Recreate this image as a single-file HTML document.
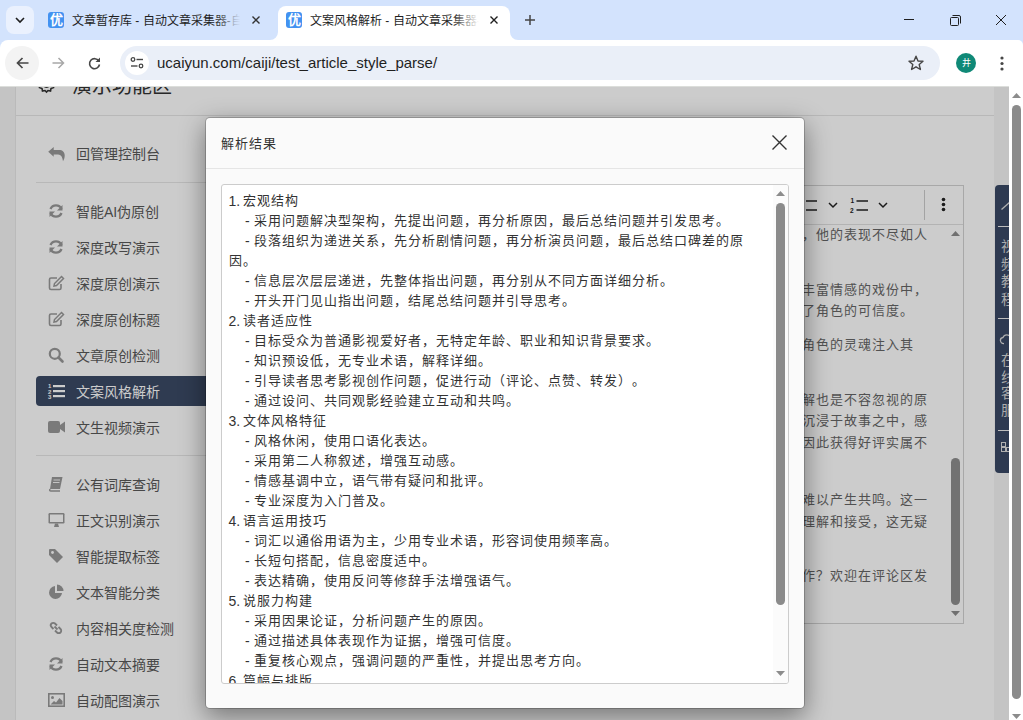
<!DOCTYPE html>
<html lang="zh-CN">
<head>
<meta charset="utf-8">
<style>
*{box-sizing:border-box;margin:0;padding:0}
html,body{width:1023px;height:720px;overflow:hidden;background:#fff;font-family:"Liberation Sans",sans-serif;text-spacing-trim:space-all}
.a{position:absolute}
svg{position:absolute;overflow:visible}
#tabstrip{left:0;top:0;width:1023px;height:50px;background:#d3e3fd}
#toolbar{left:0;top:40px;width:1023px;height:46px;background:#fff;border-radius:8px 5px 0 0}
.tt{position:absolute;top:13px;font-size:12px;color:#1f1f1f;white-space:nowrap;overflow:hidden;line-height:16px}
.fav{position:absolute;top:12px;width:16px;height:16px;background:#4392f1;border-radius:3px;color:#fff;font-size:13px;line-height:16px;text-align:center;font-weight:bold}
#omni{left:120px;top:46px;width:820px;height:34px;border-radius:17px;background:#eaeff8}
#url{left:157px;top:53px;font-size:15px;color:#1f1f1f;line-height:20px;white-space:nowrap}
#page{left:0;top:86px;width:1009px;height:634px;background:#f6f6f6;overflow:hidden}
#panel{left:16px;top:0;width:978px;height:700px;background:#fff}
.sep{position:absolute;height:1px;background:#e6e6e6}
.mi{position:absolute;left:36px;width:400px;height:30px;font-size:14px;color:#595959;line-height:30px;white-space:nowrap}
.mi .tx{position:absolute;left:40px;top:0.5px}
.mi.act{background:#3b4a66;color:#fff;border-radius:4px}
#overlay{left:0;top:0;width:1009px;height:634px;background:rgba(0,0,0,0.2)}
#vscroll{left:1009px;top:86px;width:14px;height:634px;background:#fff}
#modal{left:205px;top:117px;width:600px;height:592px;background:#fafafa;border:1px solid rgba(0,0,0,.2);border-radius:5px;box-shadow:0 8px 26px rgba(0,0,0,.42);background-clip:padding-box}
#mhead{left:0;top:0;width:598px;height:51px;border-bottom:1px solid #e5e5e5}
#mtitle{left:14.5px;top:15.5px;font-size:13px;letter-spacing:1px;color:#333;line-height:20px}
#ta{left:15px;top:66px;width:568px;height:500px;background:#fff;border:1px solid #ccc;border-radius:3px;overflow:hidden}
.ln{position:absolute;font-size:14px;line-height:20px;color:#333;white-space:nowrap}
.cj{font-size:13px;letter-spacing:1px}
.ed{position:absolute;font-size:13px;letter-spacing:1px;line-height:20px;color:#666;white-space:nowrap}
</style>
</head>
<body>
<div id="tabstrip" class="a"></div>
<div id="toolbar" class="a"></div>

<!-- tab strip -->
<div class="a" style="left:6px;top:6px;width:28px;height:28px;border-radius:8px;background:#eaf1fe"></div>
<svg style="left:14px;top:16px" width="12" height="8" viewBox="0 0 12 8"><path d="M2 2 L6 6 L10 2" stroke="#1f1f1f" stroke-width="1.6" fill="none"/></svg>
<div class="fav" style="left:48px">优</div>
<div class="tt" style="left:72px;width:168px">文章暂存库 - 自动文章采集器-自动文章</div>
<div class="a" style="left:215px;top:10px;width:28px;height:20px;background:linear-gradient(90deg,rgba(211,227,253,0),#d3e3fd 90%)"></div>
<svg style="left:252px;top:16px" width="8" height="8" viewBox="0 0 8 8"><path d="M0.5 0.5 L7.5 7.5 M7.5 0.5 L0.5 7.5" stroke="#333" stroke-width="1.4"/></svg>
<!-- active tab -->
<div class="a" style="left:278px;top:6px;width:232px;height:40px;background:#fff;border-radius:8px 8px 0 0"></div>
<svg style="left:270px;top:32px" width="8" height="8" viewBox="0 0 8 8"><path d="M8 0 V8 H0 A8 8 0 0 0 8 0 Z" fill="#fff"/></svg>
<svg style="left:510px;top:32px" width="8" height="8" viewBox="0 0 8 8"><path d="M0 0 V8 H8 A8 8 0 0 1 0 0 Z" fill="#fff"/></svg>
<div class="fav" style="left:286px">优</div>
<div class="tt" style="left:310px;width:170px">文案风格解析 - 自动文章采集器-自动</div>
<div class="a" style="left:452px;top:10px;width:30px;height:20px;background:linear-gradient(90deg,rgba(255,255,255,0),#fff 90%)"></div>
<svg style="left:490px;top:16px" width="8" height="8" viewBox="0 0 8 8"><path d="M0.5 0.5 L7.5 7.5 M7.5 0.5 L0.5 7.5" stroke="#1f1f1f" stroke-width="1.4"/></svg>
<svg style="left:525px;top:15px" width="10" height="10" viewBox="0 0 10 10"><path d="M5 0 V10 M0 5 H10" stroke="#444" stroke-width="1.5"/></svg>
<!-- window controls -->
<svg style="left:904px;top:19px" width="10" height="1" viewBox="0 0 10 1"><path d="M0 0.5 H10" stroke="#1f1f1f" stroke-width="1"/></svg>
<svg style="left:950px;top:15px" width="11" height="11" viewBox="0 0 11 11"><rect x="0.5" y="2.5" width="8" height="8" stroke="#1f1f1f" stroke-width="1" fill="none" rx="1"/><path d="M2.5 0.5 H9 Q10.5 0.5 10.5 2 V8.5" stroke="#1f1f1f" stroke-width="1" fill="none"/></svg>
<svg style="left:996px;top:15px" width="10" height="10" viewBox="0 0 10 10"><path d="M0 0 L10 10 M10 0 L0 10" stroke="#1f1f1f" stroke-width="1"/></svg>
<!-- toolbar -->
<div class="a" style="left:5px;top:46px;width:34px;height:34px;border-radius:17px;background:#f3f3f3"></div>
<svg style="left:16px;top:57px" width="13" height="12" viewBox="0 0 13 12"><path d="M12.5 6 H1.5 M6.5 1 L1.5 6 L6.5 11" stroke="#474747" stroke-width="1.7" fill="none"/></svg>
<svg style="left:52px;top:57px" width="13" height="12" viewBox="0 0 13 12"><path d="M0.5 6 H11.5 M6.5 1 L11.5 6 L6.5 11" stroke="#a8a8a8" stroke-width="1.5" fill="none"/></svg>
<svg style="left:88px;top:57px" width="13" height="13" viewBox="0 0 13 13"><path d="M10.8 4 A5 5 0 1 0 11.5 7.5" stroke="#474747" stroke-width="1.6" fill="none"/><path d="M12 0.5 V5 H7.5 Z" fill="#474747"/></svg>
<div id="omni" class="a"></div>
<div class="a" style="left:125px;top:51px;width:24px;height:24px;border-radius:12px;background:#fff"></div>
<svg style="left:130px;top:57px" width="14" height="12" viewBox="0 0 14 12"><circle cx="3" cy="2.5" r="1.8" stroke="#474747" stroke-width="1.3" fill="none"/><path d="M6.5 2.5 H13" stroke="#474747" stroke-width="1.4"/><circle cx="11" cy="9" r="1.8" stroke="#474747" stroke-width="1.3" fill="none"/><path d="M1 9 H7.5" stroke="#474747" stroke-width="1.4"/></svg>
<div id="url" class="a">ucaiyun.com/caiji/test_article_style_parse/</div>
<svg style="left:908px;top:55px" width="16" height="16" viewBox="0 0 16 16"><path d="M8 1.2 L10 6 L15 6.3 L11.2 9.5 L12.4 14.5 L8 11.8 L3.6 14.5 L4.8 9.5 L1 6.3 L6 6 Z" stroke="#474747" stroke-width="1.4" fill="none" stroke-linejoin="round"/></svg>
<div class="a" style="left:956px;top:53px;width:20px;height:20px;border-radius:10px;background:#108977;color:#fff;font-size:9px;line-height:20px;text-align:center">井</div>
<svg style="left:999px;top:55.5px" width="6" height="15" viewBox="0 0 6 15"><circle cx="3" cy="2" r="1.6" fill="#474747"/><circle cx="3" cy="7.5" r="1.6" fill="#474747"/><circle cx="3" cy="13" r="1.6" fill="#474747"/></svg>

<div id="page" class="a">
  <div id="panel" class="a"></div>
  <div class="a" style="left:15px;top:0;width:1px;height:634px;background:#e9e9e9"></div>
  <div class="sep" style="left:16px;top:29px;width:978px"></div>
  <div class="sep" style="left:36px;top:96px;width:400px"></div>
  <div class="sep" style="left:36px;top:369px;width:400px"></div>
  <div class="mi" style="top:52px"><svg style="left:12px;top:7px" width="17" height="17" viewBox="0 0 17 17"><path d="M0.2 6.8 L5.7 2 V5 H11 C14.5 5 16.7 7 16.7 10.5 C16.7 12.5 16.2 14.5 15 16.2 C14.6 13.5 13.8 9.5 10 9.5 H5.7 V11.7 Z" fill="#999"/></svg><div class="tx">回管理控制台</div></div>
<div class="mi" style="top:110px"><svg style="left:12px;top:7px" width="16" height="16" viewBox="0 0 16 16"><path d="M13.5 6 A6 6 0 0 0 2.5 6" stroke="#999" stroke-width="2.4" fill="none"/><path d="M14.5 2 L14.5 7.5 L9 7.5 Z" fill="#999"/><path d="M2.5 10 A6 6 0 0 0 13.5 10" stroke="#999" stroke-width="2.4" fill="none"/><path d="M1.5 14 L1.5 8.5 L7 8.5 Z" fill="#999"/></svg><div class="tx">智能AI伪原创</div></div>
<div class="mi" style="top:146px"><svg style="left:12px;top:7px" width="16" height="16" viewBox="0 0 16 16"><path d="M13.5 6 A6 6 0 0 0 2.5 6" stroke="#999" stroke-width="2.4" fill="none"/><path d="M14.5 2 L14.5 7.5 L9 7.5 Z" fill="#999"/><path d="M2.5 10 A6 6 0 0 0 13.5 10" stroke="#999" stroke-width="2.4" fill="none"/><path d="M1.5 14 L1.5 8.5 L7 8.5 Z" fill="#999"/></svg><div class="tx">深度改写演示</div></div>
<div class="mi" style="top:182px"><svg style="left:12px;top:7px" width="17" height="16" viewBox="0 0 17 16"><path d="M9 3 H3 Q1.5 3 1.5 4.5 V13 Q1.5 14.5 3 14.5 H11.5 Q13 14.5 13 13 V9" stroke="#999" stroke-width="1.6" fill="none"/><path d="M6 11 L6.5 8.5 L13.5 1.5 L15.5 3.5 L8.5 10.5 Z" fill="none" stroke="#999" stroke-width="1.5"/></svg><div class="tx">深度原创演示</div></div>
<div class="mi" style="top:218px"><svg style="left:12px;top:7px" width="17" height="16" viewBox="0 0 17 16"><path d="M9 3 H3 Q1.5 3 1.5 4.5 V13 Q1.5 14.5 3 14.5 H11.5 Q13 14.5 13 13 V9" stroke="#999" stroke-width="1.6" fill="none"/><path d="M6 11 L6.5 8.5 L13.5 1.5 L15.5 3.5 L8.5 10.5 Z" fill="none" stroke="#999" stroke-width="1.5"/></svg><div class="tx">深度原创标题</div></div>
<div class="mi" style="top:254px"><svg style="left:12px;top:7px" width="16" height="16" viewBox="0 0 16 16"><circle cx="6.8" cy="6.8" r="5" stroke="#999" stroke-width="2.2" fill="none"/><path d="M10.5 10.5 L14.5 14.5" stroke="#999" stroke-width="2.6" stroke-linecap="round"/></svg><div class="tx">文章原创检测</div></div>
<div class="mi act" style="top:290px"><svg style="left:12px;top:6px" width="17" height="18" viewBox="0 0 17 18"><text x="0" y="6" font-size="6" fill="#fff" font-weight="bold" font-family="Liberation Sans">1</text><text x="0" y="11.5" font-size="6" fill="#fff" font-weight="bold" font-family="Liberation Sans">2</text><text x="0" y="17" font-size="6" fill="#fff" font-weight="bold" font-family="Liberation Sans">3</text><rect x="5" y="3" width="12" height="2.2" fill="#fff"/><rect x="5" y="8" width="12" height="2.2" fill="#fff"/><rect x="5" y="13" width="12" height="2.2" fill="#fff"/></svg><div class="tx">文案风格解析</div></div>
<div class="mi" style="top:326px"><svg style="left:12px;top:8px" width="18" height="14" viewBox="0 0 18 14"><rect x="0" y="1" width="12" height="12" rx="2" fill="#999"/><path d="M12 5 L17 1.5 V12.5 L12 9 Z" fill="#999"/></svg><div class="tx">文生视频演示</div></div>
<div class="mi" style="top:383px"><svg style="left:12px;top:7px" width="16" height="16" viewBox="0 0 16 16"><path d="M4 1 H14.5 L12 13 H2 Z" fill="#999"/><path d="M2 13 Q1 15 3 15 H12" stroke="#999" stroke-width="1.5" fill="none"/><path d="M5.5 4 H12 M5 6.5 H11.5" stroke="#fff" stroke-width="0.9"/></svg><div class="tx">公有词库查询</div></div>
<div class="mi" style="top:419px"><svg style="left:12px;top:7px" width="17" height="16" viewBox="0 0 17 16"><rect x="0.5" y="1" width="16" height="10.5" rx="1.2" fill="#999"/><rect x="2" y="2.5" width="13" height="7.5" fill="#fff"/><path d="M6 15 H11 L10 11.5 H7 Z" fill="#999"/></svg><div class="tx">正文识别演示</div></div>
<div class="mi" style="top:455px"><svg style="left:12px;top:7px" width="16" height="16" viewBox="0 0 16 16"><path d="M1 1.5 V7 L9 15 L15 9 L7 1 H1.5 Z" fill="#999"/><circle cx="4.5" cy="4.5" r="1.4" fill="#fff"/></svg><div class="tx">智能提取标签</div></div>
<div class="mi" style="top:491px"><svg style="left:12px;top:7px" width="16" height="16" viewBox="0 0 16 16"><path d="M7 2 A6.5 6.5 0 1 0 14 9 H7 Z" fill="#999"/><path d="M9 0.5 A6.5 6.5 0 0 1 15.5 7 H9 Z" fill="#999"/></svg><div class="tx">文本智能分类</div></div>
<div class="mi" style="top:527px"><svg style="left:12px;top:7px" width="16" height="16" viewBox="0 0 16 16"><path d="M5.5 9 L3.5 7 A2.3 2.3 0 0 1 7 3.5 L9 5.5" stroke="#999" stroke-width="1.8" fill="none"/><path d="M10.5 7 L12.5 9 A2.3 2.3 0 0 1 9 12.5 L7 10.5" stroke="#999" stroke-width="1.8" fill="none"/><path d="M6.5 6.5 L9.5 9.5" stroke="#999" stroke-width="1.8"/></svg><div class="tx">内容相关度检测</div></div>
<div class="mi" style="top:563px"><svg style="left:12px;top:7px" width="16" height="16" viewBox="0 0 16 16"><path d="M13.5 6 A6 6 0 0 0 2.5 6" stroke="#999" stroke-width="2.4" fill="none"/><path d="M14.5 2 L14.5 7.5 L9 7.5 Z" fill="#999"/><path d="M2.5 10 A6 6 0 0 0 13.5 10" stroke="#999" stroke-width="2.4" fill="none"/><path d="M1.5 14 L1.5 8.5 L7 8.5 Z" fill="#999"/></svg><div class="tx">自动文本摘要</div></div>
<div class="mi" style="top:599px"><svg style="left:12px;top:8px" width="17" height="14" viewBox="0 0 17 14"><rect x="0.8" y="0.8" width="15.4" height="12.4" stroke="#999" stroke-width="1.6" fill="none"/><circle cx="4.5" cy="4.5" r="1.5" fill="#999"/><path d="M2.5 11.5 L6 8 L8 9.5 L11.5 5 L14.5 8 V11.5 Z" fill="#999"/></svg><div class="tx">自动配图演示</div></div>

  <!-- page header -->
  <svg style="left:39px;top:-8px" width="15" height="13" viewBox="0 0 15 13"><path d="M7.5 0 L9 1.5 L11.5 1 L12 3.5 L14.5 4.5 L13.5 7 L14.5 9.5 L12 10.5 L11.5 13 L9 12.5 L7.5 14 L6 12.5 L3.5 13 L3 10.5 L0.5 9.5 L1.5 7 L0.5 4.5 L3 3.5 L3.5 1 L6 1.5 Z" stroke="#333" stroke-width="1.6" fill="none"/><circle cx="7.5" cy="7" r="2.3" stroke="#333" stroke-width="1.5" fill="none"/></svg>
  <div class="a" style="left:72px;top:-12px;font-size:20px;line-height:24px;color:#333;white-space:nowrap">演示功能区</div>
  <!-- editor -->
  <div class="a" style="left:300px;top:99px;width:664px;height:439px;border:1px solid #d2d2d2;background:#fff"></div>
  <div class="a" style="left:301px;top:138px;width:662px;height:1px;background:#e0e0e0"></div>
  <svg style="left:806px;top:114px" width="12" height="11" viewBox="0 0 12 11"><path d="M0 1 H11 M0 10 H11" stroke="#222" stroke-width="1.7"/></svg>
  <svg style="left:828px;top:116px" width="10" height="6" viewBox="0 0 10 6"><path d="M1 1 L5 5 L9 1" stroke="#222" stroke-width="1.5" fill="none"/></svg>
  <svg style="left:850px;top:110px" width="20" height="18" viewBox="0 0 20 18"><text x="0.5" y="7" font-size="6.5" font-weight="bold" fill="#222" font-family="Liberation Sans">1</text><text x="0" y="17" font-size="6.5" font-weight="bold" fill="#222" font-family="Liberation Sans">2</text><path d="M6.5 5 H18 M6.5 14 H18" stroke="#222" stroke-width="1.7"/></svg>
  <svg style="left:878px;top:116px" width="10" height="6" viewBox="0 0 10 6"><path d="M1 1 L5 5 L9 1" stroke="#222" stroke-width="1.5" fill="none"/></svg>
  <div class="a" style="left:924px;top:104px;width:1px;height:30px;background:#ccc"></div>
  <svg style="left:941px;top:111px" width="5" height="15" viewBox="0 0 5 15"><circle cx="2.5" cy="2.5" r="1.8" fill="#222"/><circle cx="2.5" cy="7.5" r="1.8" fill="#222"/><circle cx="2.5" cy="12.5" r="1.8" fill="#222"/></svg>
  <div class="ed" style="right:81px;top:139px;text-align:right">些角色时，他的表现不尽如人</div>
  <div class="ed" style="right:81px;top:194px;text-align:right">在一些需要表达丰富情感的戏份中，</div>
  <div class="ed" style="right:95px;top:215px;text-align:right">了角色的可信度。</div>
  <div class="ed" style="right:95px;top:249px;text-align:right">演员未能将角色的灵魂注入其</div>
  <div class="ed" style="right:81px;top:304px;text-align:right">剧情难以理解也是不容忽视的原</div>
  <div class="ed" style="right:81px;top:325px;text-align:right">观众难以沉浸于故事之中，感</div>
  <div class="ed" style="right:81px;top:347px;text-align:right">因此获得好评实属不</div>
  <div class="ed" style="right:81px;top:404px;text-align:right">观众难以产生共鸣。这一</div>
  <div class="ed" style="right:81px;top:426px;text-align:right">观众的理解和接受，这无疑</div>
  <div class="ed" style="right:81px;top:480px;text-align:right">的影视作？欢迎在评论区发</div>
  <!-- editor scrollbar -->
  <svg style="left:951px;top:145px" width="9" height="5" viewBox="0 0 9 5"><path d="M0 5 L4.5 0 L9 5 Z" fill="#8c8c8c"/></svg>
  <div class="a" style="left:951px;top:372px;width:9px;height:147px;border-radius:4.5px;background:#8f8f8f"></div>
  <svg style="left:951px;top:525px" width="9" height="5" viewBox="0 0 9 5"><path d="M0 0 L4.5 5 L9 0 Z" fill="#8c8c8c"/></svg>
  <!-- right margin -->
  <div class="a" style="left:994px;top:0;width:15px;height:634px;background:#f5f5f5"></div>
  <!-- navy floating panel -->
  <div class="a" style="left:995px;top:99px;width:40px;height:288px;background:#3a4966;border-radius:4px;overflow:hidden">
    <svg style="left:6px;top:15px" width="10" height="10" viewBox="0 0 10 10"><path d="M0.5 9.5 L10 1" stroke="#ddd" stroke-width="1.3"/></svg>
    <div class="a" style="left:3px;top:41px;width:30px;height:1px;background:#eee"></div>
    <div class="a" style="left:6px;top:53px;font-size:14px;line-height:17.5px;color:#d8d8d8;width:14px;word-break:break-all">视频教程</div>
    <div class="a" style="left:3px;top:133px;width:30px;height:1px;background:#eee"></div>
    <svg style="left:6px;top:149px" width="12" height="10" viewBox="0 0 12 10"><path d="M3 9.5 A3 3 0 0 1 2 3.5 A4 4 0 0 1 9.5 3.5 A3 3 0 0 1 11 9" stroke="#ddd" stroke-width="1.3" fill="none"/></svg>
    <div class="a" style="left:6px;top:167px;font-size:14px;line-height:16.5px;color:#d8d8d8;width:14px;word-break:break-all">在线客服</div>
    <div class="a" style="left:3px;top:245px;width:30px;height:1px;background:#eee"></div>
    <svg style="left:6px;top:257px" width="10" height="10" viewBox="0 0 10 10"><rect x="0.5" y="0.5" width="4" height="4" stroke="#ddd" stroke-width="1" fill="none"/><rect x="0.5" y="5.5" width="4" height="4" stroke="#ddd" stroke-width="1" fill="none"/><rect x="5.5" y="5.5" width="4" height="4" stroke="#ddd" stroke-width="1" fill="none"/></svg>
  </div>

  <div id="overlay" class="a"></div>
</div>
<div class="a" style="left:0;top:86px;width:1009px;height:1px;background:#dcdedb"></div>
<div id="vscroll" class="a"></div>
<svg style="left:1012px;top:93px" width="9" height="5" viewBox="0 0 9 5"><path d="M0 5 L4.5 0 L9 5 Z" fill="#8c8c8c"/></svg>
<div class="a" style="left:1012px;top:105px;width:9px;height:594px;border-radius:4.5px;background:#8b8b8b"></div>
<svg style="left:1012px;top:714px" width="9" height="5" viewBox="0 0 9 5"><path d="M0 0 L4.5 5 L9 0 Z" fill="#8c8c8c"/></svg>

<div id="modal" class="a">
  <div id="mhead" class="a"><div id="mtitle" class="a">解析结果</div></div>
  <svg style="left:566px;top:17px" width="15" height="15" viewBox="0 0 15 15"><path d="M0.5 0.5 L14.5 14.5 M14.5 0.5 L0.5 14.5" stroke="#333" stroke-width="1.4"/></svg>
  <div id="ta" class="a">
<div class="ln" style="left:6.5px;top:6px">1.</div>
<div class="ln cj" style="left:20.5px;top:6px">宏观结构</div>
<div class="ln" style="left:23px;top:26px">-</div>
<div class="ln cj" style="left:32px;top:26px">采用问题解决型架构，先提出问题，再分析原因，最后总结问题并引发思考。</div>
<div class="ln" style="left:23px;top:46px">-</div>
<div class="ln cj" style="left:32px;top:46px">段落组织为递进关系，先分析剧情问题，再分析演员问题，最后总结口碑差的原</div>
<div class="ln cj" style="left:6.5px;top:66px">因。</div>
<div class="ln" style="left:23px;top:86px">-</div>
<div class="ln cj" style="left:32px;top:86px">信息层次层层递进，先整体指出问题，再分别从不同方面详细分析。</div>
<div class="ln" style="left:23px;top:106px">-</div>
<div class="ln cj" style="left:32px;top:106px">开头开门见山指出问题，结尾总结问题并引导思考。</div>
<div class="ln" style="left:6.5px;top:126px">2.</div>
<div class="ln cj" style="left:20.5px;top:126px">读者适应性</div>
<div class="ln" style="left:23px;top:146px">-</div>
<div class="ln cj" style="left:32px;top:146px">目标受众为普通影视爱好者，无特定年龄、职业和知识背景要求。</div>
<div class="ln" style="left:23px;top:166px">-</div>
<div class="ln cj" style="left:32px;top:166px">知识预设低，无专业术语，解释详细。</div>
<div class="ln" style="left:23px;top:186px">-</div>
<div class="ln cj" style="left:32px;top:186px">引导读者思考影视创作问题，促进行动（评论、点赞、转发）。</div>
<div class="ln" style="left:23px;top:206px">-</div>
<div class="ln cj" style="left:32px;top:206px">通过设问、共同观影经验建立互动和共鸣。</div>
<div class="ln" style="left:6.5px;top:226px">3.</div>
<div class="ln cj" style="left:20.5px;top:226px">文体风格特征</div>
<div class="ln" style="left:23px;top:246px">-</div>
<div class="ln cj" style="left:32px;top:246px">风格休闲，使用口语化表达。</div>
<div class="ln" style="left:23px;top:266px">-</div>
<div class="ln cj" style="left:32px;top:266px">采用第二人称叙述，增强互动感。</div>
<div class="ln" style="left:23px;top:286px">-</div>
<div class="ln cj" style="left:32px;top:286px">情感基调中立，语气带有疑问和批评。</div>
<div class="ln" style="left:23px;top:306px">-</div>
<div class="ln cj" style="left:32px;top:306px">专业深度为入门普及。</div>
<div class="ln" style="left:6.5px;top:326px">4.</div>
<div class="ln cj" style="left:20.5px;top:326px">语言运用技巧</div>
<div class="ln" style="left:23px;top:346px">-</div>
<div class="ln cj" style="left:32px;top:346px">词汇以通俗用语为主，少用专业术语，形容词使用频率高。</div>
<div class="ln" style="left:23px;top:366px">-</div>
<div class="ln cj" style="left:32px;top:366px">长短句搭配，信息密度适中。</div>
<div class="ln" style="left:23px;top:386px">-</div>
<div class="ln cj" style="left:32px;top:386px">表达精确，使用反问等修辞手法增强语气。</div>
<div class="ln" style="left:6.5px;top:406px">5.</div>
<div class="ln cj" style="left:20.5px;top:406px">说服力构建</div>
<div class="ln" style="left:23px;top:426px">-</div>
<div class="ln cj" style="left:32px;top:426px">采用因果论证，分析问题产生的原因。</div>
<div class="ln" style="left:23px;top:446px">-</div>
<div class="ln cj" style="left:32px;top:446px">通过描述具体表现作为证据，增强可信度。</div>
<div class="ln" style="left:23px;top:466px">-</div>
<div class="ln cj" style="left:32px;top:466px">重复核心观点，强调问题的严重性，并提出思考方向。</div>
<div class="ln" style="left:6.5px;top:486px">6.</div>
<div class="ln cj" style="left:20.5px;top:486px">篇幅与排版</div>
  <div class="a" style="left:551px;top:0;width:15px;height:498px;background:#fbfbfb"></div>
  <svg style="left:554px;top:5.5px" width="9" height="5" viewBox="0 0 9 5"><path d="M0 5 L4.5 0 L9 5 Z" fill="#8c8c8c"/></svg>
  <div class="a" style="left:554px;top:18px;width:9px;height:402px;border-radius:4.5px;background:#8b8b8b"></div>
  <svg style="left:554px;top:485.5px" width="9" height="5" viewBox="0 0 9 5"><path d="M0 0 L4.5 5 L9 0 Z" fill="#8c8c8c"/></svg>
  </div>
</div>
</body>
</html>
